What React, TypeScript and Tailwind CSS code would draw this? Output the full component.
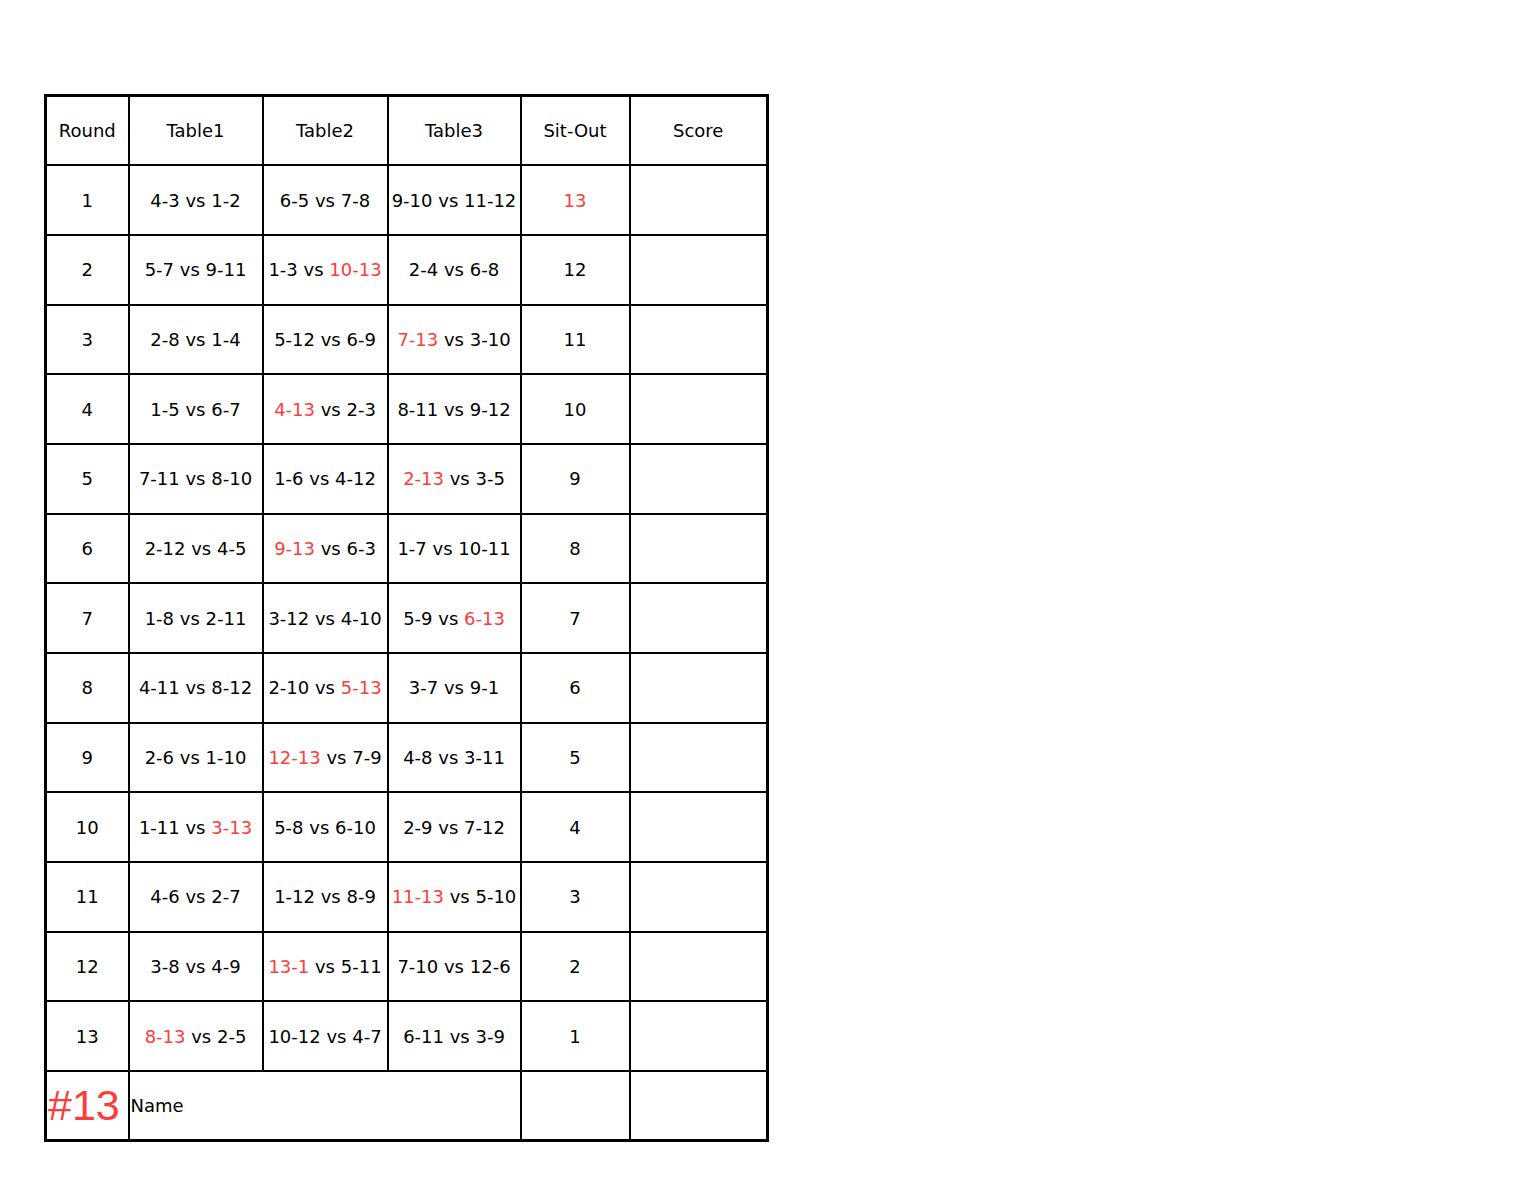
type Match = { a: string; b: string; red?: "a" | "b" };

const m = (a: string, b: string, red?: "a" | "b"): Match => ({ a, b, red });

const rounds: { t: [Match, Match, Match]; out: string; outRed?: boolean }[] = [
  { t: [m("4-3", "1-2"), m("6-5", "7-8"), m("9-10", "11-12")], out: "13", outRed: true },
  { t: [m("5-7", "9-11"), m("1-3", "10-13", "b"), m("2-4", "6-8")], out: "12" },
  { t: [m("2-8", "1-4"), m("5-12", "6-9"), m("7-13", "3-10", "a")], out: "11" },
  { t: [m("1-5", "6-7"), m("4-13", "2-3", "a"), m("8-11", "9-12")], out: "10" },
  { t: [m("7-11", "8-10"), m("1-6", "4-12"), m("2-13", "3-5", "a")], out: "9" },
  { t: [m("2-12", "4-5"), m("9-13", "6-3", "a"), m("1-7", "10-11")], out: "8" },
  { t: [m("1-8", "2-11"), m("3-12", "4-10"), m("5-9", "6-13", "b")], out: "7" },
  { t: [m("4-11", "8-12"), m("2-10", "5-13", "b"), m("3-7", "9-1")], out: "6" },
  { t: [m("2-6", "1-10"), m("12-13", "7-9", "a"), m("4-8", "3-11")], out: "5" },
  { t: [m("1-11", "3-13", "b"), m("5-8", "6-10"), m("2-9", "7-12")], out: "4" },
  { t: [m("4-6", "2-7"), m("1-12", "8-9"), m("11-13", "5-10", "a")], out: "3" },
  { t: [m("3-8", "4-9"), m("13-1", "5-11", "a"), m("7-10", "12-6")], out: "2" },
  { t: [m("8-13", "2-5", "a"), m("10-12", "4-7"), m("6-11", "3-9")], out: "1" },
];

const cell = "border-2 border-black text-center align-middle p-0 whitespace-nowrap";

function MatchText({ x }: { x: Match }) {
  return (
    <>
      <span className={x.red === "a" ? "text-[#ff3b3b]" : ""}>{x.a}</span>
      {" vs "}
      <span className={x.red === "b" ? "text-[#ff3b3b]" : ""}>{x.b}</span>
    </>
  );
}

export default function App() {
  return (
    <div className="min-h-[1187px] w-[1536px] bg-white pt-[94px] pl-[44px]">
      <table
        className="table-fixed border-collapse border-[3px] border-black text-[18px] text-black"
        style={{ fontFamily: '"DejaVu Sans", sans-serif' }}
      >
        <colgroup>
          <col className="w-[83px]" />
          <col className="w-[134px]" />
          <col className="w-[125px]" />
          <col className="w-[133px]" />
          <col className="w-[109px]" />
          <col className="w-[138px]" />
        </colgroup>
        <tbody>
          <tr className="h-[69.7px]">
            <td className={cell}>Round</td>
            <td className={cell}>Table1</td>
            <td className={cell}>Table2</td>
            <td className={cell}>Table3</td>
            <td className={cell}>Sit-Out</td>
            <td className={cell}>Score</td>
          </tr>
          {rounds.map((r, i) => (
            <tr key={i} className="h-[69.7px]">
              <td className={cell}>{i + 1}</td>
              {r.t.map((x, j) => (
                <td key={j} className={cell}>
                  <MatchText x={x} />
                </td>
              ))}
              <td className={`${cell} ${r.outRed ? "text-[#ff3b3b]" : ""}`}>{r.out}</td>
              <td className={cell}></td>
            </tr>
          ))}
          <tr className="h-[69.7px]">
            <td
              className="border-2 border-black p-0 pl-[1px] text-left align-middle text-[43px] leading-none text-[#ff3b3b]"
              style={{ fontFamily: '"Liberation Sans", Arial, sans-serif' }}
            >
              #13
            </td>
            <td colSpan={3} className="border-2 border-black p-0 pl-[1px] text-left align-middle">
              Name
            </td>
            <td className={cell}></td>
            <td className={cell}></td>
          </tr>
        </tbody>
      </table>
    </div>
  );
}
